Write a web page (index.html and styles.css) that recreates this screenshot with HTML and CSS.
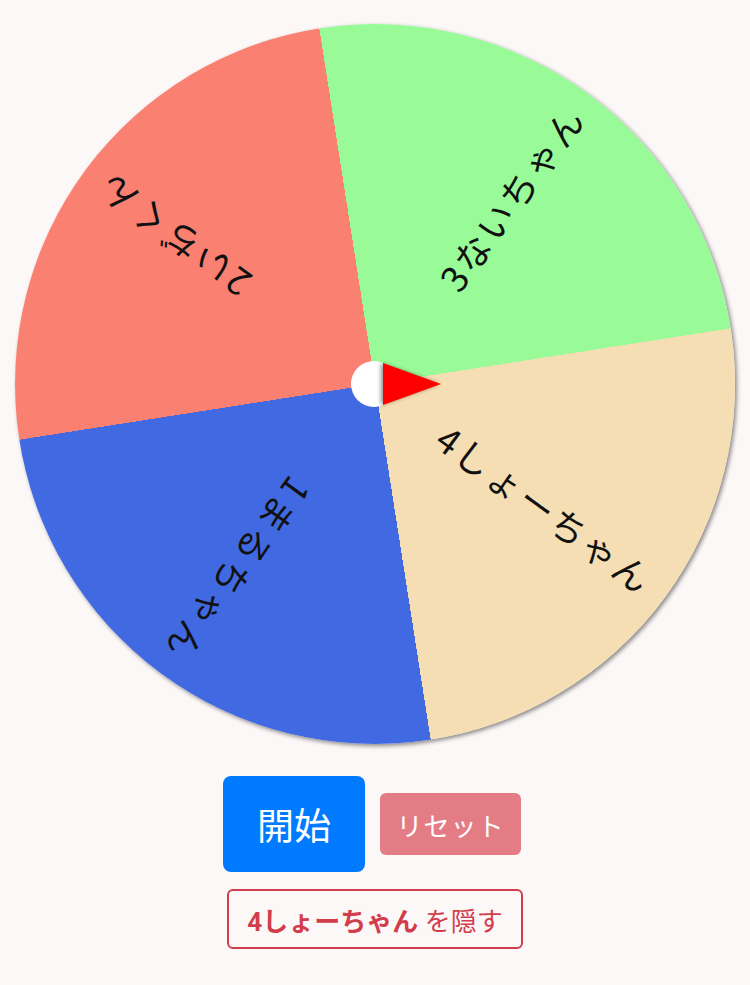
FILE: index.html
```html
<!DOCTYPE html>
<html lang="ja">
<head>
<meta charset="utf-8">
<title>ルーレット</title>
<link rel="stylesheet" href="styles.css">
</head>
<body>
<main class="page">
  <div class="wheel">
    <div class="label label-green"><span>3ないちゃん</span></div>
    <div class="label label-wheat"><span>4しょーちゃん</span></div>
    <div class="label label-blue"><span>1まるちゃん</span></div>
    <div class="label label-salmon"><span>2いぢくん</span></div>
    <div class="pointer-dot"></div>
    <svg class="pointer-arrow" width="60" height="46" viewBox="0 0 60 46">
      <polygon points="0,2 58,23 0,44" fill="#ff0000"/>
    </svg>
  </div>
  <div class="controls">
    <button class="btn btn-start">開始</button>
    <button class="btn btn-reset">リセット</button>
  </div>
  <div class="controls controls-second">
    <button class="btn btn-hide"><span class="hide-text"><b>4しょーちゃん</b> を隠す</span></button>
  </div>
</main>
</body>
</html>
```

FILE: styles.css
```css
html, body {
  margin: 0;
  padding: 0;
  background: #fdf8f8;
}

.page {
  display: flex;
  flex-direction: column;
  align-items: center;
  padding-top: 24px;
  font-family: Roboto, "Noto Sans CJK JP", sans-serif;
}

.wheel {
  position: relative;
  width: 720px;
  height: 720px;
  border-radius: 50%;
  background: conic-gradient(from -8.9deg,
    #98fb98 0deg 90deg,
    #f5deb3 90deg 180deg,
    #4169e1 180deg 270deg,
    #fa8072 270deg 360deg);
  box-shadow: 2px 2px 4px rgba(0, 0, 0, 0.45);
}

.label {
  position: absolute;
  left: 360px;
  top: 360px;
  width: 340px;
  height: 50px;
  margin-top: -25px;
  transform-origin: 0 50%;
  display: flex;
  align-items: center;
  justify-content: flex-end;
  font-family: "Noto Sans CJK JP", sans-serif;
  font-weight: 400;
  font-size: 36px;
  letter-spacing: 3px;
  color: #111;
  white-space: nowrap;
}

.label-green { transform: rotate(-54deg); }
.label-wheat { transform: rotate(36deg); }
.label-blue { transform: rotate(126deg); }
.label-salmon { transform: rotate(216deg); }

.pointer-dot {
  position: absolute;
  left: 336px;
  top: 337px;
  width: 46px;
  height: 46px;
  border-radius: 50%;
  background: #fff;
}

.pointer-arrow {
  position: absolute;
  left: 368px;
  top: 337px;
  filter: drop-shadow(-2px 0 2px rgba(0, 0, 0, 0.45));
}

.controls {
  display: flex;
  align-items: center;
  justify-content: center;
  gap: 15px;
  margin-top: 32px;
  margin-right: 6px;
}

.controls-second {
  margin-top: 17px;
  margin-right: 0;
}

.btn {
  font-family: Roboto, "Noto Sans CJK JP", sans-serif;
  border: none;
  color: #fff;
  cursor: pointer;
  display: flex;
  align-items: center;
  justify-content: center;
  padding: 0;
}

.btn-start {
  width: 142px;
  height: 96px;
  border-radius: 8px;
  background: #007bff;
  font-size: 37px;
}

.btn-reset {
  width: 141px;
  height: 62px;
  border-radius: 6px;
  background: #e47c86;
  font-size: 26px;
  letter-spacing: 1px;
}

.btn-hide {
  width: 296px;
  height: 60px;
  border-radius: 6px;
  background: transparent;
  border: 2px solid #d23d4c;
  color: #d23d4c;
  font-size: 26px;
  font-weight: 400;
}

.hide-text {
  white-space: nowrap;
}

.btn-hide b {
  font-weight: 700;
}
```
